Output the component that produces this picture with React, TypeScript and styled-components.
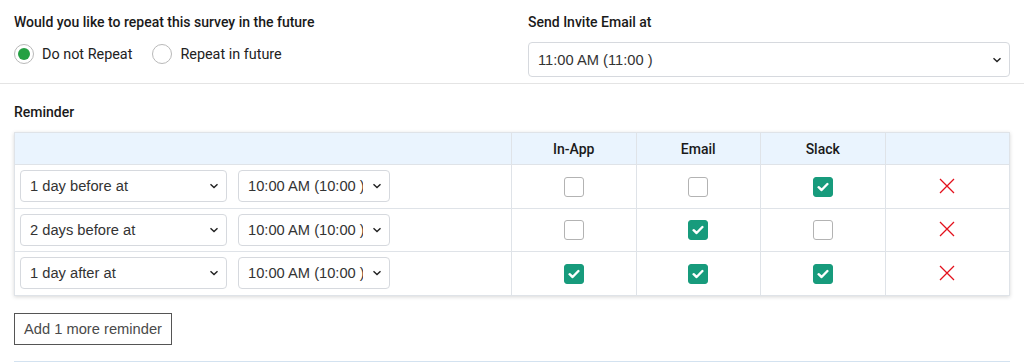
import React, { useState } from "react";
import styled, { createGlobalStyle } from "styled-components";

const GlobalStyle = createGlobalStyle`
  body {
    margin: 0;
    background: #ffffff;
    font-family: Roboto, "Liberation Sans", Arial, sans-serif;
    color: #1d1d1d;
  }
`;

const Page = styled.div`
  width: 1024px;
`;

const TopSection = styled.div`
  display: grid;
  grid-template-columns: 500px 1fr;
  column-gap: 14px;
  padding: 13px 14px 6px;
  border-bottom: 1px solid #e4e4e4;
`;

const Field = styled.div`
  display: flex;
  flex-direction: column;
`;

const Label = styled.div<{ $gap?: number }>`
  font-size: 14px;
  font-weight: 500;
  line-height: 18px;
  color: #1a1a1a;
  margin-bottom: ${({ $gap }) => $gap ?? 0}px;
`;

const RadioRow = styled.div`
  display: flex;
  align-items: center;
  gap: 20px;
  height: 20px;
`;

const RadioOption = styled.label`
  display: flex;
  align-items: center;
  gap: 8px;
  font-size: 14.4px;
  color: #222;
  cursor: pointer;
`;

const RadioCircle = styled.span<{ $checked: boolean }>`
  width: 20px;
  height: 20px;
  box-sizing: border-box;
  border-radius: 50%;
  border: 1px solid #b9b9b9;
  display: flex;
  align-items: center;
  justify-content: center;

  &::after {
    content: "";
    width: 12px;
    height: 12px;
    border-radius: 50%;
    background: ${({ $checked }) => ($checked ? "#24a043" : "transparent")};
  }
`;

const SelectWrap = styled.div<{ $width?: string; $height: number }>`
  position: relative;
  width: ${({ $width }) => $width ?? "100%"};
  height: ${({ $height }) => $height}px;
`;

const NativeSelect = styled.select`
  appearance: none;
  -webkit-appearance: none;
  width: 100%;
  height: 100%;
  box-sizing: border-box;
  border: 1px solid #d6d9de;
  border-radius: 4px;
  background: #fff;
  padding: 0 26px 0 9px;
  font-family: "Liberation Sans", Arial, sans-serif;
  font-size: 14.7px;
  color: #333;
  outline: none;
`;

const Chevron = styled.svg`
  position: absolute;
  right: 8px;
  top: 50%;
  width: 10px;
  height: 6px;
  transform: translateY(-50%);
  pointer-events: none;
`;

const ReminderSection = styled.div`
  padding: 19px 14px 0;
`;

const Table = styled.table`
  width: 100%;
  border-collapse: collapse;
  table-layout: fixed;
  box-shadow: 0 1px 4px rgba(0, 0, 0, 0.16);
  margin-top: 11px;

  th,
  td {
    border: 1px solid #dfe3e8;
  }
`;

const HeadCell = styled.th`
  height: 32px;
  box-sizing: border-box;
  background: #eaf4fe;
  font-size: 14px;
  font-weight: 500;
  color: #1a1a1a;
  text-align: center;
  padding: 0;
`;

const Cell = styled.td<{ $center?: boolean }>`
  height: 43.6px;
  box-sizing: border-box;
  padding: 0 5px;
  text-align: ${({ $center }) => ($center ? "center" : "left")};
  vertical-align: middle;
`;

const SelectPair = styled.div`
  display: flex;
  gap: 11px;
`;

const Box = styled.span<{ $checked: boolean }>`
  display: inline-flex;
  align-items: center;
  justify-content: center;
  width: 20px;
  height: 20px;
  box-sizing: border-box;
  border-radius: 3px;
  vertical-align: middle;
  border: ${({ $checked }) =>
    $checked ? "1px solid #179b7c" : "1.5px solid #b3b3b3"};
  background: ${({ $checked }) => ($checked ? "#179b7c" : "#fff")};
  cursor: pointer;
`;

const RemoveButton = styled.button`
  border: none;
  background: none;
  padding: 0;
  margin-top: 3px;
  cursor: pointer;
  display: inline-flex;
`;

const AddButton = styled.button`
  margin-top: 17px;
  height: 32px;
  padding: 0 9px;
  background: #fff;
  border: 1px solid #555;
  border-radius: 0;
  font-family: "Liberation Sans", Arial, sans-serif;
  font-size: 14.7px;
  color: #4a4a4a;
  cursor: pointer;
`;

const BottomRule = styled.div`
  margin-top: 16px;
  border-top: 1px solid #d3e2f0;
`;

const ChevronIcon = () => (
  <Chevron viewBox="0 0 10 6">
    <polyline
      points="1.5 1.2 5 4.6 8.5 1.2"
      fill="none"
      stroke="#222"
      strokeWidth="1.4"
    />
  </Chevron>
);

interface SelectProps {
  value: string;
  options: string[];
  width?: string;
  height: number;
}

const Select = ({ value, options, width, height }: SelectProps) => (
  <SelectWrap $width={width} $height={height}>
    <NativeSelect defaultValue={value}>
      {options.map((o) => (
        <option key={o}>{o}</option>
      ))}
    </NativeSelect>
    <ChevronIcon />
  </SelectWrap>
);

const Check = ({ checked }: { checked: boolean }) => (
  <Box $checked={checked}>
    {checked && (
      <svg width="12" height="10" viewBox="0 0 12 10">
        <polyline
          points="1.6 5.2 4.6 8 10.4 2"
          fill="none"
          stroke="#fff"
          strokeWidth="2.4"
          strokeLinecap="round"
          strokeLinejoin="round"
        />
      </svg>
    )}
  </Box>
);

type Reminder = {
  when: string;
  time: string;
  inApp: boolean;
  email: boolean;
  slack: boolean;
};

const whenOptions = [
  "1 day before at",
  "2 days before at",
  "1 day after at",
  "2 days after at",
];
const timeOptions = ["09:00 AM (09:00 )", "10:00 AM (10:00 )", "11:00 AM (11:00 )"];

const initialReminders: Reminder[] = [
  { when: "1 day before at", time: "10:00 AM (10:00 )", inApp: false, email: false, slack: true },
  { when: "2 days before at", time: "10:00 AM (10:00 )", inApp: false, email: true, slack: false },
  { when: "1 day after at", time: "10:00 AM (10:00 )", inApp: true, email: true, slack: true },
];

export default function App() {
  const [repeat, setRepeat] = useState(false);
  const [reminders] = useState<Reminder[]>(initialReminders);

  return (
    <Page>
      <GlobalStyle />
      <TopSection>
        <Field>
          <Label $gap={13}>Would you like to repeat this survey in the future</Label>
          <RadioRow>
            <RadioOption onClick={() => setRepeat(false)}>
              <RadioCircle $checked={!repeat} />
              Do not Repeat
            </RadioOption>
            <RadioOption onClick={() => setRepeat(true)}>
              <RadioCircle $checked={repeat} />
              Repeat in future
            </RadioOption>
          </RadioRow>
        </Field>
        <Field>
          <Label $gap={11}>Send Invite Email at</Label>
          <Select value="11:00 AM (11:00 )" options={timeOptions} height={35} />
        </Field>
      </TopSection>

      <ReminderSection>
        <Label>Reminder</Label>
        <Table>
          <colgroup>
            <col style={{ width: 497 }} />
            <col />
            <col />
            <col />
            <col />
          </colgroup>
          <thead>
            <tr>
              <HeadCell />
              <HeadCell>In-App</HeadCell>
              <HeadCell>Email</HeadCell>
              <HeadCell>Slack</HeadCell>
              <HeadCell />
            </tr>
          </thead>
          <tbody>
            {reminders.map((r, i) => (
              <tr key={i}>
                <Cell>
                  <SelectPair>
                    <Select value={r.when} options={whenOptions} width="207px" height={32} />
                    <Select value={r.time} options={timeOptions} width="152px" height={32} />
                  </SelectPair>
                </Cell>
                <Cell $center>
                  <Check checked={r.inApp} />
                </Cell>
                <Cell $center>
                  <Check checked={r.email} />
                </Cell>
                <Cell $center>
                  <Check checked={r.slack} />
                </Cell>
                <Cell $center>
                  <RemoveButton aria-label="Remove reminder">
                    <svg width="16" height="16" viewBox="0 0 16 16">
                      <path d="M1 1 L15 15 M15 1 L1 15" stroke="#e3101c" strokeWidth="1.3" />
                    </svg>
                  </RemoveButton>
                </Cell>
              </tr>
            ))}
          </tbody>
        </Table>
        <AddButton>Add 1 more reminder</AddButton>
        <BottomRule />
      </ReminderSection>
    </Page>
  );
}
